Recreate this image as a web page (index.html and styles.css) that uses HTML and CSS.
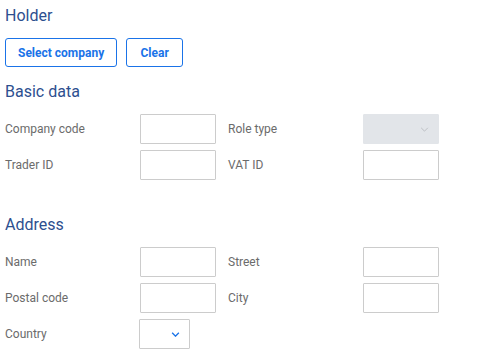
FILE: index.html
```html
<!DOCTYPE html>
<html lang="en">
<head>
    <meta charset="UTF-8">
    <meta name="viewport" content="width=device-width, initial-scale=1.0">
    <title>Holder</title>
    <link rel="stylesheet" href="styles.css">
</head>
<body>

    <div class="page">
        <h2 class="section-title">Holder</h2>
        <div class="actions">
            <button class="btn-outline">Select company</button>
            <button class="btn-outline">Clear</button>
        </div>

        <h2 class="section-title basic">Basic data</h2>
        <div class="form-grid">
            <div class="field">
                <label>Company code</label>
                <input type="text">
            </div>
            <div class="field">
                <label>Role type</label>
                <div class="select disabled">
                    <svg viewBox="0 0 10 6" width="9" height="5"><path d="M1 1l4 4 4-4" fill="none" stroke="currentColor" stroke-width="1"/></svg>
                </div>
            </div>
            <div class="field">
                <label>Trader ID</label>
                <input type="text">
            </div>
            <div class="field">
                <label>VAT ID</label>
                <input type="text">
            </div>
        </div>

        <h2 class="section-title address">Address</h2>
        <div class="form-grid">
            <div class="field">
                <label>Name</label>
                <input type="text">
            </div>
            <div class="field">
                <label>Street</label>
                <input type="text">
            </div>
            <div class="field">
                <label>Postal code</label>
                <input type="text">
            </div>
            <div class="field">
                <label>City</label>
                <input type="text">
            </div>
            <div class="field">
                <label>Country</label>
                <div class="select small">
                    <svg viewBox="0 0 10 6" width="9" height="5"><path d="M1 1l4 4 4-4" fill="none" stroke="currentColor" stroke-width="1.6"/></svg>
                </div>
            </div>
        </div>
    </div>

</body>
</html>
```

FILE: styles.css
```css
* {
    margin: 0;
    padding: 0;
    box-sizing: border-box;
    font-family: Roboto, "Liberation Sans", sans-serif;
}
body {
    background: #fff;
}
.page {
    padding: 6px 5px 0 5px;
}
.section-title {
    font-size: 16px;
    font-weight: 400;
    line-height: 20px;
    color: #2d4f8f;
    margin-bottom: 12px;
}
.section-title.basic {
    margin-top: 15px;
}
.section-title.address {
    margin-top: 35px;
}
.actions {
    display: flex;
    gap: 9px;
}
.btn-outline {
    height: 29px;
    min-width: 57px;
    padding: 0 12px;
    background: #fff;
    border: 1px solid #1a73e8;
    border-radius: 3px;
    color: #1a73e8;
    font-size: 12px;
    font-weight: 700;
    cursor: pointer;
}
.form-grid {
    display: grid;
    grid-template-columns: 211px 211px;
    column-gap: 12px;
    row-gap: 6px;
}
.field {
    display: grid;
    grid-template-columns: 135px 76px;
    align-items: center;
}
.field label {
    font-size: 12px;
    color: #6b6b6b;
    margin-top: -1px;
}
.field input {
    height: 30px;
    width: 76px;
    border: 1px solid #ccc;
    border-radius: 1px;
    background: #fff;
}
.select {
    height: 30px;
    width: 76px;
    border: 1px solid #ccc;
    border-radius: 1px;
    display: flex;
    align-items: center;
    justify-content: flex-end;
    padding-right: 9px;
    color: #1a73e8;
}
.select.disabled {
    background: #e2e5e9;
    border-color: #e2e5e9;
    color: #b4b8bd;
}
.select.small {
    width: 51px;
    margin-left: -1px;
}
```
